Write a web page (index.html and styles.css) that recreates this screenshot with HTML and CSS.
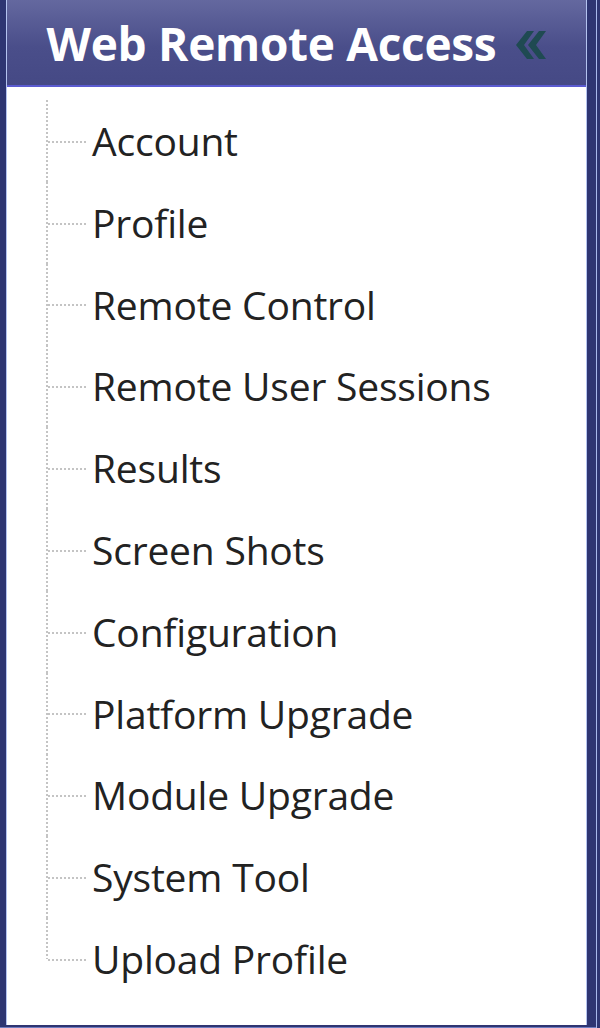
FILE: index.html
```html
<!DOCTYPE html>
<html>
<head>
<meta charset="utf-8">
<link rel="stylesheet" href="styles.css">
</head>
<body>
<div class="frame">
  <div class="panel">
    <div class="header">
      <span class="title">Web Remote Access</span>
      <svg class="chev" width="34" height="30" viewBox="0 0 34 30">
        <path d="M13 1 L2 15 L13 29 L20 29 L10 15 L20 1 Z" fill="#1f4a52"/>
        <path d="M25 1 L14 15 L25 29 L32 29 L22 15 L32 1 Z" fill="#1f4a52"/>
      </svg>
    </div>
    <ul class="tree">
      <li>Account</li>
      <li>Profile</li>
      <li>Remote Control</li>
      <li>Remote User Sessions</li>
      <li>Results</li>
      <li>Screen Shots</li>
      <li>Configuration</li>
      <li>Platform Upgrade</li>
      <li>Module Upgrade</li>
      <li>System Tool</li>
      <li>Upload Profile</li>
    </ul>
  </div>
</div>
</body>
</html>
```
FILE: styles.css
```css
html, body {
  margin: 0;
  padding: 0;
  background: #ffffff;
}
.frame {
  width: 600px;
  height: 1028px;
  box-sizing: border-box;
  background: #2e3572;
  padding: 0 13px 3px 6px;
  display: flex;
  box-shadow: inset -3px 0 0 #2e3572, inset -4px 0 0 #a9b9ec, inset 0 -1px 0 #6f7cc0;
}
.panel {
  flex: 1;
  background: #ffffff;
  border-left: 1px solid #b4c3f0;
  border-right: 1px solid #b4c3f0;
  display: flex;
  flex-direction: column;
}
.header {
  height: 85px;
  background: linear-gradient(#64689f, #4a4e8a 55%, #454985);
  border-bottom: 2px solid #5b5bd0;
  display: flex;
  align-items: center;
  justify-content: center;
  gap: 18px;
  padding-left: 2px;
}
.title {
  font-family: "Open Sans", sans-serif;
  font-weight: 700;
  font-size: 46px;
  color: #ffffff;
  letter-spacing: -0.3px;
}
.chev {
  display: block;
  margin-top: 4px;
}
.tree {
  list-style: none;
  margin: 13px 0 0 39px;
  padding: 0;
}
.tree li {
  position: relative;
  height: 81.8px;
  line-height: 81.8px;
  padding-left: 46px;
  font-family: "Open Sans", sans-serif;
  font-size: 39px;
  color: #222222;
  letter-spacing: -0.2px;
}
.tree li::before {
  content: "";
  position: absolute;
  left: 0;
  top: 0;
  width: 2px;
  height: 100%;
  background-image: linear-gradient(#c4c4c4 50%, transparent 50%);
  background-size: 2px 4px;
}
.tree li:last-child::before {
  height: 50%;
}
.tree li::after {
  content: "";
  position: absolute;
  left: 2px;
  top: 50%;
  width: 40px;
  height: 2px;
  background-image: linear-gradient(90deg, #c4c4c4 50%, transparent 50%);
  background-size: 4px 2px;
}
```
